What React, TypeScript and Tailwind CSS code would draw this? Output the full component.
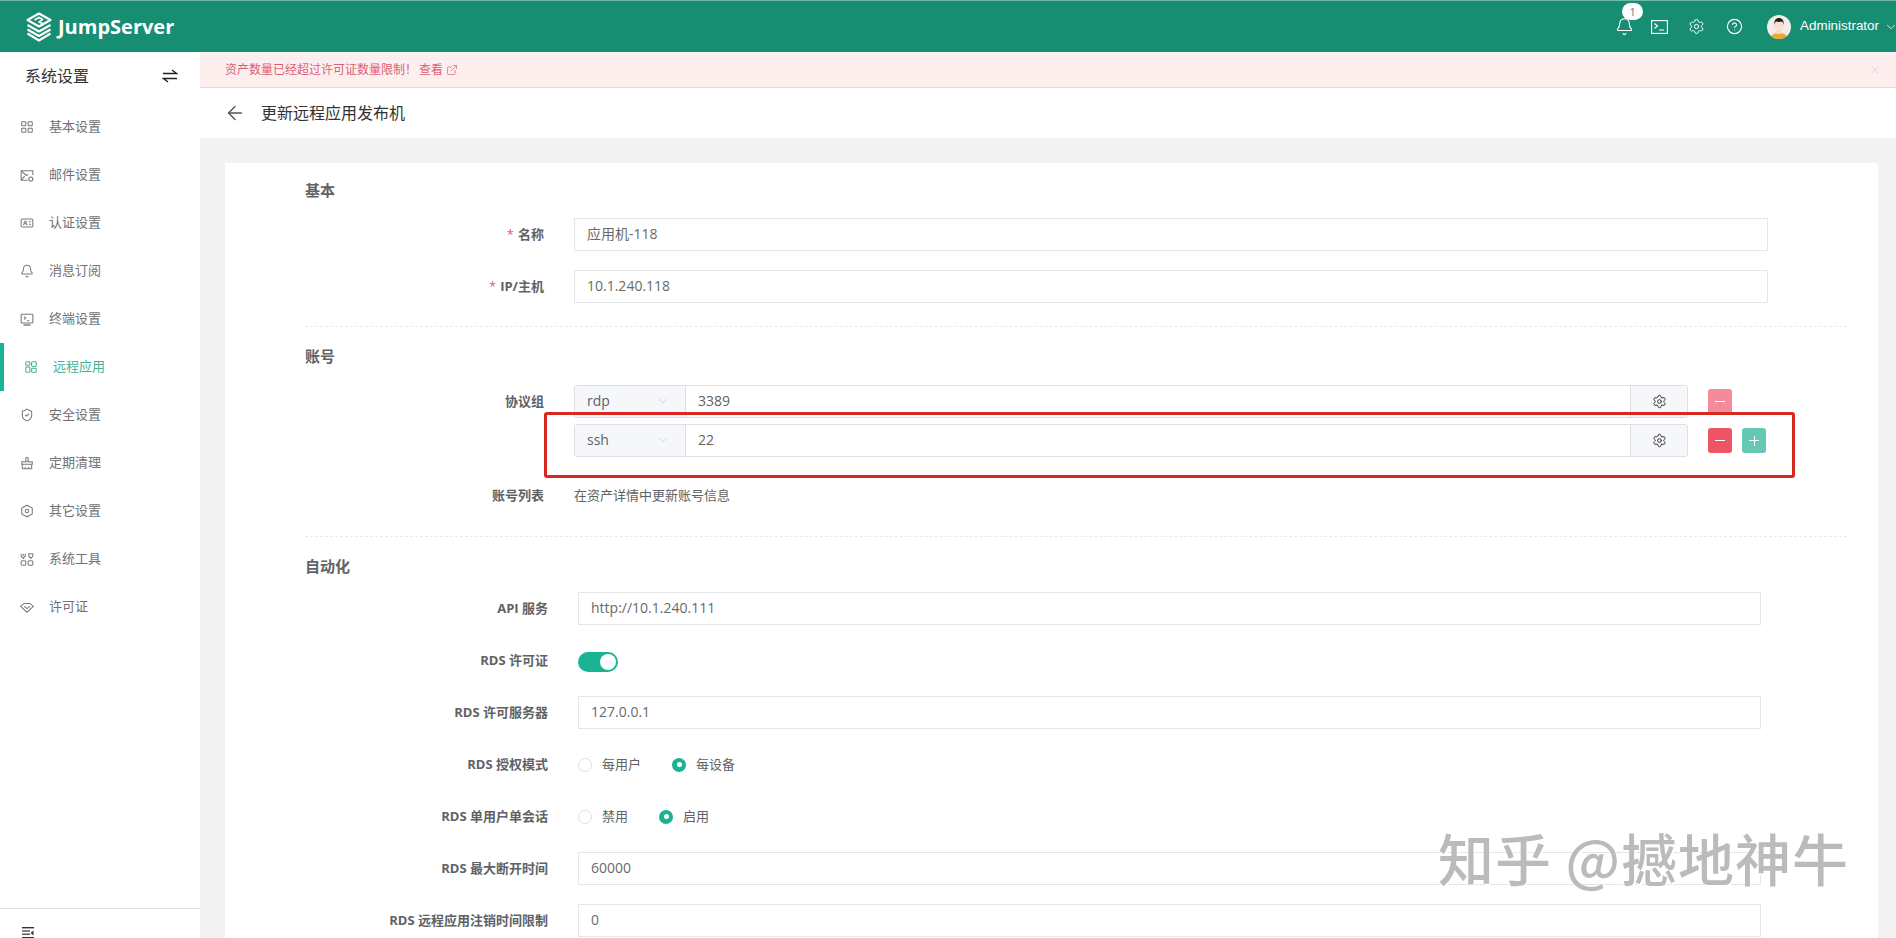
import { ReactNode } from 'react';
import { ArrowLeft, Bell, ChevronDown, CircleHelp, ExternalLink, IdCard, LayoutGrid, Settings, ShieldCheck, X } from 'lucide-react';

const iconProps = {
  width: 14,
  height: 14,
  viewBox: '0 0 24 24',
  fill: 'none',
  stroke: 'currentColor',
  strokeWidth: 1.8,
};

const MailGear = () => (
  <svg {...iconProps} width="15" height="15">
    <path d="M22 11V4H2v16h11" />
    <path d="M2 4l9 8 3-2" />
    <path d="M2 20l6-7" />
    <circle cx="18.5" cy="18" r="3.5" />
  </svg>
);

const TerminalMonitor = () => (
  <svg {...iconProps} width="15" height="15">
    <rect x="2" y="3" width="20" height="15" rx="1" />
    <path d="M7 7l3 2.5L7 12M12 14h4" />
    <path d="M6 21.5h12" strokeWidth="2.4" />
  </svg>
);

const RemoteApps = () => (
  <svg {...iconProps}>
    <rect x="3" y="3" width="7" height="6" rx="1.5" />
    <rect x="13" y="3" width="8" height="8" rx="1.5" />
    <rect x="3" y="12" width="7" height="9" rx="1.5" />
    <rect x="13" y="14" width="8" height="7" rx="1.5" />
  </svg>
);

const Broom = () => (
  <svg {...iconProps}>
    <path d="M10 10V4a2 2 0 0 1 4 0v6" />
    <path d="M3 10h18v4H3z" />
    <path d="M4 14v8h16v-8M9 22v-3M15 22v-3" />
  </svg>
);

const HexDot = () => (
  <svg {...iconProps}>
    <path d="M12 2l9 5v10l-9 5-9-5V7z" />
    <circle cx="12" cy="12" r="3" />
  </svg>
);

const Tools = () => (
  <svg {...iconProps} width="15" height="15">
    <path d="M2 2v4l3.5 4L9 6V2M5.5 6V2" />
    <path d="M15 2h7v4l-3.5 4L15 6z" />
    <rect x="2" y="14" width="8" height="8" rx="2" />
    <rect x="14" y="14" width="8" height="8" rx="2" />
  </svg>
);

const License = () => (
  <svg {...iconProps} width="15" height="15">
    <path d="M1 10l6-5h10l6 5-11 10z" />
    <path d="M7 10l5 4 5-4" />
  </svg>
);

const SwapArrows = () => (
  <svg width="16" height="14" viewBox="0 0 16 14" fill="none" stroke="#222" strokeWidth="1.3">
    <path d="M1 4.5h13.5L10 1" />
    <path d="M15 9.5H1.5L6 13" />
  </svg>
);

const CollapseIcon = () => (
  <svg width="12" height="12" viewBox="0 0 12 12" fill="#333">
    <rect x="0" y="0" width="12" height="1.4" />
    <rect x="0" y="3.4" width="8" height="1.2" />
    <rect x="0" y="6.6" width="8" height="1.2" />
    <rect x="0" y="10" width="12" height="1.4" />
    <path d="M8.5 6l3-2.4v4.8z" />
  </svg>
);

const Logo = () => (
  <svg width="26" height="30" viewBox="0 0 26 30" fill="none" stroke="#fff" strokeWidth="2.2" strokeLinejoin="round">
    <path d="M13 1.5L24.5 8 13 14.5 1.5 8z" fill="#178d72" />
    <path d="M8.5 8L13 5.5l3.5 2L13 10l3.5 1.5" strokeWidth="1.8" />
    <path d="M1.5 13L13 19.5 24.5 13" />
    <path d="M1.5 17.5L13 24 24.5 17.5" />
    <path d="M1.5 21.5L13 28.5 24.5 21.5" />
  </svg>
);

const Avatar = () => (
  <svg width="24" height="24" viewBox="0 0 24 24">
    <defs>
      <clipPath id="avatar-clip">
        <circle cx="12" cy="12" r="12" />
      </clipPath>
    </defs>
    <g clipPath="url(#avatar-clip)">
      <rect width="24" height="24" fill="#f4ece6" />
      <path d="M3 24c1-5 5-6 9-6s8 1 9 6z" fill="#eda92f" />
      <rect x="9.5" y="13" width="5" height="6" fill="#f3d7c4" />
      <ellipse cx="12" cy="10.5" rx="4.4" ry="5.5" fill="#f6dfcf" />
      <path d="M7.4 10c-.6-5 2-7 4.6-7s5.2 2 4.6 7c-.5-2-1-3-1.6-3.4-1.5.6-4.5.6-6 0-.6.4-1.1 1.4-1.6 3.4z" fill="#222" />
    </g>
  </svg>
);

const navItems: { label: string; icon: ReactNode; active?: boolean }[] = [
  { label: '基本设置', icon: <LayoutGrid size={14} strokeWidth={1.8} /> },
  { label: '邮件设置', icon: <MailGear /> },
  { label: '认证设置', icon: <IdCard size={14} strokeWidth={1.8} /> },
  { label: '消息订阅', icon: <Bell size={14} strokeWidth={1.8} /> },
  { label: '终端设置', icon: <TerminalMonitor /> },
  { label: '远程应用', icon: <RemoteApps />, active: true },
  { label: '安全设置', icon: <ShieldCheck size={14} strokeWidth={1.8} /> },
  { label: '定期清理', icon: <Broom /> },
  { label: '其它设置', icon: <HexDot /> },
  { label: '系统工具', icon: <Tools /> },
  { label: '许可证', icon: <License /> },
];

const SectionTitle = ({ children, className }: { children: ReactNode; className: string }) => (
  <div className={`h-[22px] text-[15px] leading-[22px] font-bold text-[#606266] ${className}`}>{children}</div>
);

const Divider = ({ className }: { className: string }) => (
  <div className={`border-t border-dashed border-[#e7eaec] ${className}`} />
);

const Label = ({ children, required, wide }: { children: ReactNode; required?: boolean; wide?: boolean }) => (
  <div className={`shrink-0 text-right text-[13px] leading-[33px] font-bold text-[#606266] ${wide ? 'w-[243px]' : 'w-[239px]'}`}>
    {required && <span className="mr-1 font-normal text-[#ed5565]">*</span>}
    {children}
  </div>
);

const TextBox = ({ value }: { value: string }) => (
  <div className="h-[33px] flex-1 border border-[#e5e6e7] bg-white px-3 text-[14px] leading-[29px] text-[#676a6c]">{value}</div>
);

const BasicRow = ({ label, value, required }: { label: string; value: string; required?: boolean }) => (
  <div className="mb-[19px] flex h-[33px] gap-[30px] pr-[79px]">
    <Label required={required}>{label}</Label>
    <TextBox value={value} />
  </div>
);

const AutoRow = ({ label, children }: { label: string; children: ReactNode }) => (
  <div className="mb-[19px] flex h-[33px] gap-[30px] pr-[86px]">
    <Label wide>{label}</Label>
    {children}
  </div>
);

const Radio = ({ label, checked }: { label: string; checked?: boolean }) => (
  <div className="mr-[31px] flex items-center gap-[10px] text-[13px] text-[#606266]">
    {checked ? (
      <span className="flex h-[14px] w-[14px] items-center justify-center rounded-full bg-[#1ab394]">
        <span className="h-[5px] w-[5px] rounded-full bg-white" />
      </span>
    ) : (
      <span className="h-[14px] w-[14px] rounded-full border border-[#dcdfe6] bg-white" />
    )}
    {label}
  </div>
);

const ProtocolRow = ({ name, port, faded, add }: { name: string; port: string; faded?: boolean; add?: boolean }) => (
  <div className="flex h-[33px] items-center">
    <div className="flex h-[33px] flex-1 rounded-[3px] border border-[#dcdfe6] text-[14px] leading-[20px] text-[#606266]">
      <div className="flex w-[111px] items-center justify-between rounded-l-[3px] border-r border-[#dcdfe6] bg-[#f5f7fa] pr-[15px] pb-[2px] pl-3">
        {name}
        <ChevronDown size={14} strokeWidth={1.2} className="text-[#c0c4cc]" />
      </div>
      <div className="flex flex-1 items-center px-3 pb-[2px]">{port}</div>
      <div className="flex w-[57px] items-center justify-center rounded-r-[3px] border-l border-[#dcdfe6] bg-[#f5f7fa]">
        <Settings size={15} strokeWidth={1.6} className="text-[#333]" />
      </div>
    </div>
    <div className="ml-5 flex w-[60px] gap-[10px]">
      <div className={`flex h-[25px] w-[24px] items-center justify-center rounded-[3px] ${faded ? 'bg-[#f38b9b]' : 'bg-[#ed5565]'}`}>
        <span className="h-px w-[10px] bg-white" />
      </div>
      {add && (
        <div className="relative flex h-[25px] w-[24px] items-center justify-center rounded-[3px] bg-[#64c8b4]">
          <span className="h-px w-[10px] bg-white" />
          <span className="absolute h-[10px] w-px bg-white" />
        </div>
      )}
    </div>
  </div>
);

export default function App() {
  return (
    <div className="relative flex h-[938px] flex-col overflow-hidden font-['Open_Sans','Noto_Sans_CJK_SC',sans-serif]">
      <header className="flex h-[52px] shrink-0 items-center border-t border-[#6fb8a8] bg-[#178d72] pl-[26px] text-white">
        <Logo />
        <span className="ml-[6px] text-[20px] font-bold">JumpServer</span>
        <div className="ml-auto flex items-center">
          <div className="relative">
            <Bell size={19} strokeWidth={1.4} />
            <span className="absolute top-[-14px] left-[7px] h-[17px] w-[21px] rounded-full bg-white text-center text-[11px] leading-[17px] text-[#777]">1</span>
          </div>
          <div className="ml-[17px]">
            <svg width="17" height="14" viewBox="0 0 17 14" fill="none" stroke="#fff" strokeWidth="1.1">
              <rect x="0.6" y="0.6" width="15.8" height="12.8" />
              <path d="M3.5 3.5l3 2.5-3 2.5M8 10h5" />
            </svg>
          </div>
          <Settings size={17} strokeWidth={1.4} className="ml-[20px]" />
          <CircleHelp size={17} strokeWidth={1.6} className="ml-[21px]" />
          <div className="ml-[24px]"><Avatar /></div>
          <span className="ml-[9px] text-[13.4px] font-['Liberation_Sans',sans-serif]">Administrator</span>
          <ChevronDown size={14} strokeWidth={1.4} className="mr-[-2px] ml-[5px]" />
        </div>
      </header>

      <div className="flex min-h-0 flex-1">
        <aside className="flex w-[200px] shrink-0 flex-col bg-white">
          <div className="flex h-[51px] items-center justify-between pr-[22px] pb-[3px] pl-[25px] text-[16px] text-[#333]">
            系统设置
            <SwapArrows />
          </div>
          <nav className="flex-1">
            {navItems.map((item) => (
              <div
                key={item.label}
                className={`flex h-[48px] items-center gap-[15px] text-[13px] ${
                  item.active
                    ? 'border-l-4 border-[#1ab394] pl-[20px] text-[#3fb39c]'
                    : 'pl-[20px] text-[#6f7174]'
                }`}
              >
                <span className={`flex w-[14px] justify-center ${item.active ? 'text-[#3fb39c]' : 'text-[#77797c]'}`}>{item.icon}</span>
                {item.label}
              </div>
            ))}
          </nav>
          <div className="h-[30px] border-t border-[#e0e0e0] pt-[18px] pl-[22px]">
            <CollapseIcon />
          </div>
        </aside>

        <main className="flex min-w-0 flex-1 flex-col bg-[#f3f3f4]">
          <div className="flex h-[36px] shrink-0 items-center border-b border-[#eed9da] bg-[#fcefee] pr-[15px] pl-[25px] text-[12px] text-[#dc5f78]">
            资产数量已经超过许可证数量限制！
            <span className="ml-[2px]">查看</span>
            <ExternalLink size={12} strokeWidth={1.4} className="ml-[3px]" />
            <X size={12} strokeWidth={1.2} className="ml-auto text-[#d9c5c6]" />
          </div>
          <div className="flex h-[50px] shrink-0 items-center bg-white pl-[24px] text-[16px] text-[#333]">
            <ArrowLeft size={22} strokeWidth={1.5} className="text-[#555]" />
            <span className="ml-[15px]">更新远程应用发布机</span>
          </div>
          <div className="flex-1 pt-[25px] pr-[18px] pl-[25px]">
            <div className="h-[800px] rounded-[2px] bg-white pr-[31px] pl-[80px]">
              <SectionTitle className="mb-[17px] box-content pt-[16px]">基本</SectionTitle>
              <BasicRow label="名称" value="应用机-118" required />
              <BasicRow label="IP/主机" value="10.1.240.118" required />
              <Divider className="mt-[23px] mb-[18px]" />
              <SectionTitle className="mb-[18px]">账号</SectionTitle>
              <div className="flex gap-[30px] pr-[79px]">
                <Label>协议组</Label>
                <div className="relative flex flex-1 flex-col gap-[6px]">
                  <ProtocolRow name="rdp" port="3389" faded />
                  <ProtocolRow name="ssh" port="22" add />
                  <div className="absolute top-[27px] left-[-30px] h-[66px] w-[1251px] rounded-[3px] border-[3px] border-[#d8281f]" />
                </div>
              </div>
              <div className="mt-[22px] flex h-[33px] gap-[30px]">
                <Label>账号列表</Label>
                <div className="text-[13px] leading-[33px] text-[#606266]">在资产详情中更新账号信息</div>
              </div>
              <Divider className="mt-[24px] mb-[18px]" />
              <SectionTitle className="mb-[15px]">自动化</SectionTitle>
              <AutoRow label="API 服务"><TextBox value="http://10.1.240.111" /></AutoRow>
              <AutoRow label="RDS 许可证">
                <div className="mt-[8px] flex h-[20px] w-[40px] justify-end rounded-full bg-[#1ab394] p-[2px]">
                  <span className="h-4 w-4 rounded-full bg-white" />
                </div>
              </AutoRow>
              <AutoRow label="RDS 许可服务器"><TextBox value="127.0.0.1" /></AutoRow>
              <AutoRow label="RDS 授权模式">
                <div className="flex items-center">
                  <Radio label="每用户" />
                  <Radio label="每设备" checked />
                </div>
              </AutoRow>
              <AutoRow label="RDS 单用户单会话">
                <div className="flex items-center">
                  <Radio label="禁用" />
                  <Radio label="启用" checked />
                </div>
              </AutoRow>
              <AutoRow label="RDS 最大断开时间"><TextBox value="60000" /></AutoRow>
              <AutoRow label="RDS 远程应用注销时间限制"><TextBox value="0" /></AutoRow>
            </div>
          </div>
        </main>
      </div>

      <div className="absolute top-[817px] left-[1438px] text-[56px] leading-[80px] font-medium tracking-[1px] whitespace-nowrap text-[#bbbbbb] [text-shadow:1px_2px_0_#fff] font-['Noto_Sans_CJK_SC',sans-serif]">
        知乎 @撼地神牛
      </div>
    </div>
  );
}
